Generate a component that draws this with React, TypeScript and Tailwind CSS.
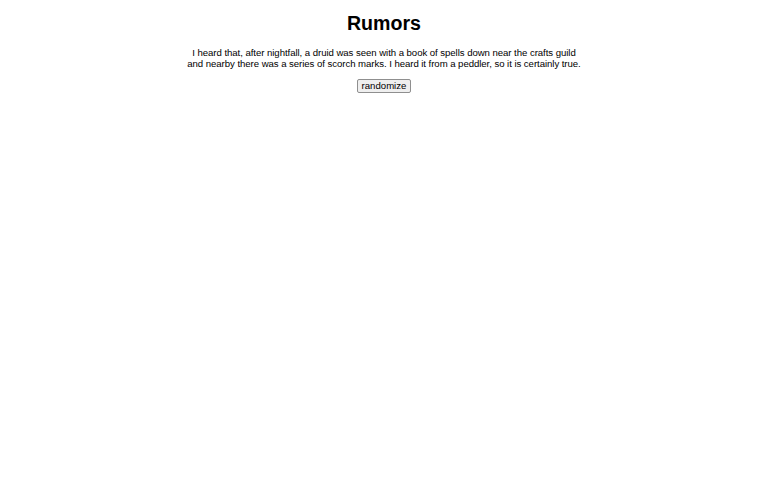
export default function App() {
  return (
    <div className="flex flex-col items-center bg-white text-black font-['Liberation_Sans',Arial,sans-serif]">
      <h1 className="mt-[12px] text-[19.6px] font-bold leading-[23px]">Rumors</h1>
      <p className="mt-[12px] text-center text-[9.6px] leading-[11px] tracking-[-0.05px]">
        I heard that, after nightfall, a druid was seen with a book of spells down near the crafts guild
        <br />
        and nearby there was a series of scorch marks. I heard it from a peddler, so it is certainly true.
      </p>
      <button className="mt-[10px] rounded-[2px] border border-[#8f8f8f] bg-[#efefef] px-[4px] py-0 text-[9.6px] leading-[12px]">
        randomize
      </button>
    </div>
  );
}
